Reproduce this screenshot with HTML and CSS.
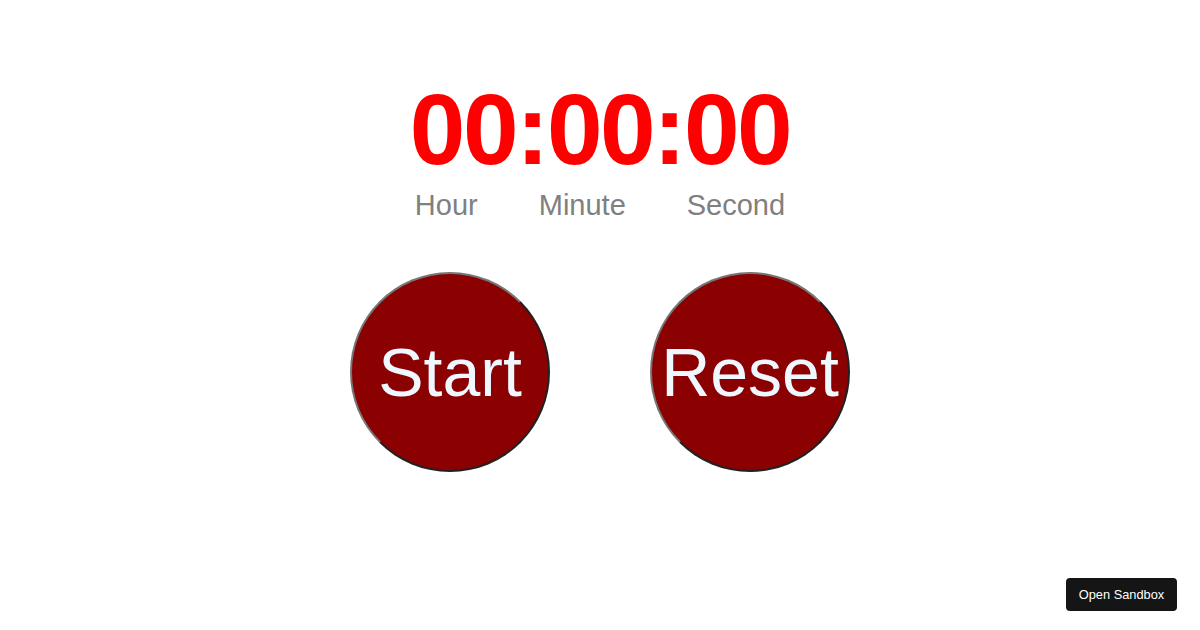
FILE: index.html
```html
<!DOCTYPE html>
<html lang="en">
<head>
<meta charset="utf-8">
<title>Stopwatch</title>
<link rel="stylesheet" href="styles.css">
</head>
<body>
<main class="app">
  <div class="timer">00:00:00</div>
  <div class="labels">
    <span class="label">Hour</span>
    <span class="label">Minute</span>
    <span class="label">Second</span>
  </div>
  <div class="controls">
    <button class="round-btn" type="button">Start</button>
    <button class="round-btn" type="button">Reset</button>
  </div>
</main>
<a class="sandbox-link" href="#">Open Sandbox</a>
</body>
</html>
```
FILE: styles.css
```css
html, body {
  margin: 0;
  padding: 0;
  background: #ffffff;
}
body {
  font-family: "Liberation Sans", Arial, sans-serif;
  width: 1200px;
  height: 630px;
  overflow: hidden;
}
.app {
  display: flex;
  flex-direction: column;
  align-items: center;
  padding-top: 72px;
}
.timer {
  font-size: 100px;
  font-weight: 700;
  color: #ff0000;
  letter-spacing: -2.5px;
  line-height: 115px;
}
.labels {
  display: flex;
  gap: 61px;
  margin-top: 2px;
  font-size: 29px;
  line-height: 33px;
  color: #808080;
}
.controls {
  display: flex;
  gap: 100px;
  margin-top: 50px;
}
.round-btn {
  width: 200px;
  height: 200px;
  border-radius: 50%;
  border: 2px outset #767676;
  background: #8b0000;
  color: #f0f8ff;
  font-family: "Liberation Sans", Arial, sans-serif;
  font-size: 68px;
  padding: 0;
  cursor: pointer;
}
.sandbox-link {
  position: fixed;
  right: 23px;
  bottom: 19px;
  width: 111px;
  height: 33px;
  display: flex;
  align-items: center;
  justify-content: center;
  background: #151515;
  color: #ffffff;
  font-family: "Liberation Sans", Arial, sans-serif;
  font-size: 12.8px;
  border-radius: 4px;
  text-decoration: none;
  box-sizing: border-box;
}
```
